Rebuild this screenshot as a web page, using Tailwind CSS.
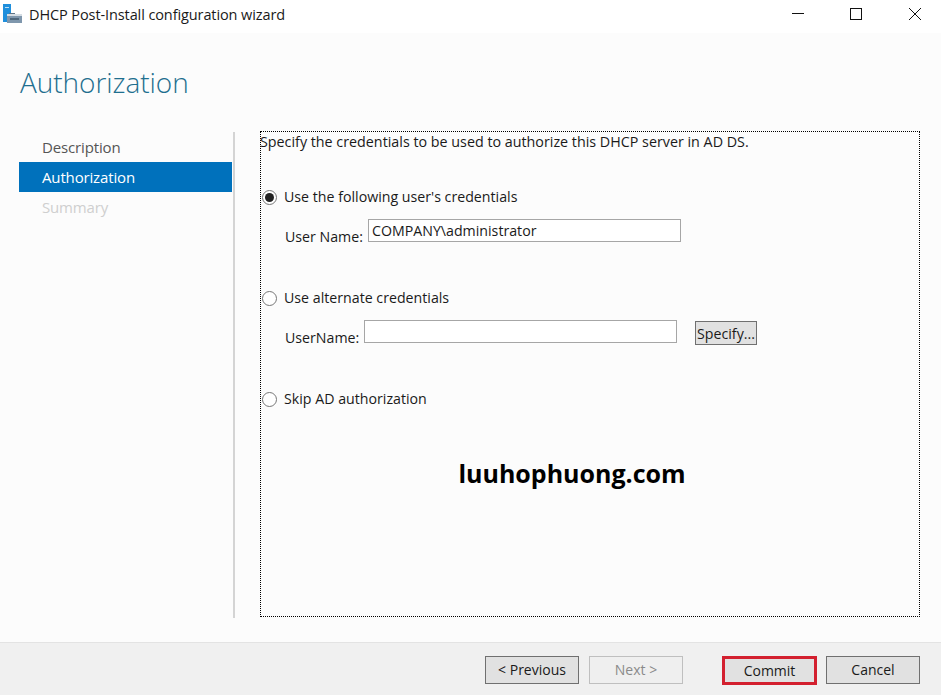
<!DOCTYPE html>
<html lang="en">
<head>
  <meta charset="UTF-8" />
  <title>DHCP Post-Install configuration wizard</title>
  <script src="https://cdn.jsdelivr.net/npm/@tailwindcss/browser@4"></script>
</head>
<body class="w-[941px] h-[695px] overflow-hidden bg-[#fcfcfc] font-['Open_Sans',sans-serif] text-[#1a1a1a] flex flex-col">
  <!-- title bar -->
  <div class="h-[33px] pb-[3px] bg-white flex items-center shrink-0">
    <svg class="ml-[3px] mt-[-2px]" width="20" height="20" viewBox="0 0 20 20">
      <rect x="0" y="0" width="8" height="18" fill="#1f8fdc" />
      <rect x="2" y="3" width="4" height="1" fill="#bfe0f5" />
      <rect x="6" y="9" width="6" height="2" fill="#5d7386" />
      <rect x="4" y="10" width="15" height="9" fill="#7f97ad" />
      <rect x="4" y="10" width="15" height="2" fill="#d5dde4" />
      <rect x="7" y="14" width="9" height="2" fill="#50687c" />
    </svg>
    <span class="ml-[6px] text-[14.5px] tracking-[-0.1px]">DHCP Post-Install configuration wizard</span>
    <div class="ml-auto mt-[-2px] flex items-center">
      <svg width="14" height="14" viewBox="0 0 14 14" class="mr-[44px]"><path d="M1 6.5H13" stroke="#111" stroke-width="1" /></svg>
      <svg width="14" height="14" viewBox="0 0 14 14" class="mr-[45px]"><rect x="1.5" y="1.5" width="11" height="11" fill="none" stroke="#111" stroke-width="1" /></svg>
      <svg width="14" height="14" viewBox="0 0 14 14" class="mr-[19px]"><path d="M1 1L13 13M13 1L1 13" stroke="#111" stroke-width="1" /></svg>
    </div>
  </div>

  <!-- heading -->
  <h1 class="h-[99px] shrink-0 pl-[20px] pt-[29px] text-[28px] leading-[40px] font-light text-[#1f6f8f] tracking-[-0.05px]">Authorization</h1>

  <!-- main -->
  <div class="h-[486px] shrink-0 flex">
    <div class="w-[216px] ml-[19px] border-r-2 border-[#d4d4d4] text-[15px] tracking-[-0.15px] leading-[30px]">
      <div class="pl-[23px] h-[30px] mr-[1px] text-[#555]">Description</div>
      <div class="pl-[23px] h-[30px] mr-[1px] bg-[#0071bc] text-white">Authorization</div>
      <div class="pl-[23px] h-[30px] mr-[1px] text-[#cfcfcf]">Summary</div>
    </div>
    <div class="ml-[25px] mt-[-1px] w-[660px] h-[486px] border border-dotted border-black text-[14.2px]">
      <p class="-ml-[1px] leading-[20px] text-[14.3px]">Specify the credentials to be used to authorize this DHCP server in AD DS.</p>

      <div class="mt-[35px] flex items-center h-[20px]">
        <span class="ml-[1px] w-[15px] h-[15px] rounded-full border border-[#777] bg-white flex items-center justify-center"><span class="w-[9px] h-[9px] rounded-full bg-[#222]"></span></span>
        <span class="ml-[7px]">Use the following user's credentials</span>
      </div>
      <div class="mt-[12px] flex items-start h-[24px]">
        <span class="ml-[24px] w-[83px] mt-[8px] leading-[20px]">User Name:</span>
        <div class="w-[313px] h-[23px] border border-[#a6a6a6] bg-white pl-[3px] leading-[22px]">COMPANY\administrator</div>
      </div>

      <div class="mt-[45px] flex items-center h-[20px]">
        <span class="ml-[1px] w-[15px] h-[15px] rounded-full border border-[#777] bg-white"></span>
        <span class="ml-[7px]">Use alternate credentials</span>
      </div>
      <div class="mt-[12px] flex items-start h-[25px]">
        <span class="ml-[24px] w-[79px] mt-[8px] leading-[20px]">UserName:</span>
        <div class="w-[313px] h-[23px] border border-[#a6a6a6] bg-white"></div>
        <div class="ml-[18px] mt-[1px] w-[62px] h-[24px] border border-[#707070] bg-[#e1e1e1] text-center leading-[23px]">Specify...</div>
      </div>

      <div class="mt-[44px] flex items-center h-[20px]">
        <span class="ml-[1px] w-[15px] h-[15px] rounded-full border border-[#777] bg-white"></span>
        <span class="ml-[7px]">Skip AD authorization</span>
      </div>

      <div class="mt-[47px] text-center pr-[36px] text-[25px] leading-[34px] font-bold text-black">luuhophuong.com</div>
    </div>
  </div>

  <!-- footer -->
  <div class="mt-[24px] flex-1 bg-[#f0f0f0] border-t border-[#e3e3e3] flex items-start pt-[13px] text-[14px]">
    <div class="ml-[485px] w-[94px] h-[28px] border border-[#707070] bg-[#e1e1e1] text-center leading-[26px]">&lt; Previous</div>
    <div class="ml-[10px] w-[94px] h-[28px] border border-[#bfbfbf] bg-[#efefef] text-[#8a8a8a] text-center leading-[26px]">Next &gt;</div>
    <div class="ml-[39px] w-[95px] h-[29px] border-[3px] border-[#d3202f] bg-[#e1e1e1] text-center leading-[23px]">Commit</div>
    <div class="ml-[9px] w-[94px] h-[28px] border border-[#707070] bg-[#e1e1e1] text-center leading-[26px]">Cancel</div>
  </div>
</body>
</html>
